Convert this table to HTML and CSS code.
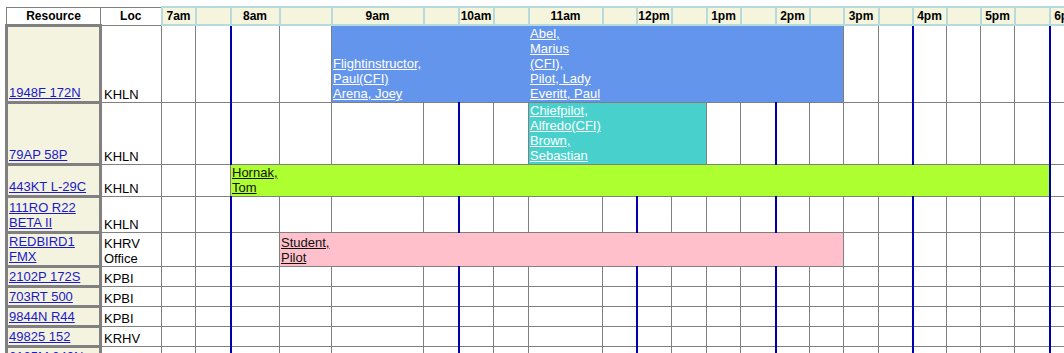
FILE: index.html
```html
<!DOCTYPE html>
<html>
<head>
<meta charset="utf-8">
<title>Schedule</title>
<link rel="stylesheet" href="styles.css">
</head>
<body>
<div class="page">
<table class="sched">
<colgroup>
<col class="c-res"><col class="c-loc">
<col class="w34"><col class="w35"><col class="w49"><col class="w52"><col class="w92"><col class="w35">
<col class="w35"><col class="w35"><col class="w74"><col class="w34"><col class="w35"><col class="w35">
<col class="w34"><col class="w35"><col class="w34"><col class="w34"><col class="w35"><col class="w34">
<col class="w34"><col class="w34"><col class="w34"><col class="w35"><col class="w34"><col class="w34">
<col class="w34"><col class="w34">
</colgroup>
<thead>
<tr>
<th class="h-res">Resource</th><th class="h-loc">Loc</th>
<th class="h-time">7am</th><th class="h-time"></th><th class="h-time">8am</th><th class="h-time"></th>
<th class="h-time">9am</th><th class="h-time"></th><th class="h-time">10am</th><th class="h-time"></th>
<th class="h-time">11am</th><th class="h-time"></th><th class="h-time">12pm</th><th class="h-time"></th>
<th class="h-time">1pm</th><th class="h-time"></th><th class="h-time">2pm</th><th class="h-time"></th>
<th class="h-time">3pm</th><th class="h-time"></th><th class="h-time">4pm</th><th class="h-time"></th>
<th class="h-time">5pm</th><th class="h-time"></th><th class="h-time">6pm</th><th class="h-time"></th>
<th class="h-time">7pm</th><th class="h-time"></th>
</tr>
</thead>
<tbody>
<tr>
<td class="res"><a href="#">1948F 172N</a></td><td class="loc">KHLN</td>
<td></td><td></td><td class="hr"></td><td></td>
<td class="ev ev-blue ev-join" colspan="4"><a href="#">Flightinstructor,<br>Paul(CFI)<br>Arena, Joey</a></td>
<td class="ev ev-blue" colspan="8"><a href="#">Abel,<br>Marius<br>(CFI),<br>Pilot, Lady<br>Everitt, Paul</a></td>
<td></td><td></td><td class="hr"></td><td></td><td></td><td></td><td class="hr"></td><td></td><td></td><td></td>
</tr>
<tr>
<td class="res"><a href="#">79AP 58P</a></td><td class="loc">KHLN</td>
<td></td><td></td><td class="hr"></td><td></td><td></td><td></td><td class="hr"></td><td></td>
<td class="ev ev-teal" colspan="4"><a href="#">Chiefpilot,<br>Alfredo(CFI)<br>Brown,<br>Sebastian</a></td>
<td></td><td></td><td class="hr"></td><td></td><td></td><td></td><td class="hr"></td><td></td><td></td><td></td><td class="hr"></td><td></td><td></td><td></td>
</tr>
<tr>
<td class="res"><a href="#">443KT L-29C</a></td><td class="loc">KHLN</td>
<td></td><td></td>
<td class="ev ev-green" colspan="20"><a href="#">Hornak,<br>Tom</a></td>
<td class="hr"></td><td></td><td></td><td></td>
</tr>
<tr class="row-roomy">
<td class="res"><a href="#">111RO R22 BETA II</a></td><td class="loc">KHLN</td>
<td></td><td></td><td class="hr"></td><td></td><td></td><td></td><td class="hr"></td><td></td><td></td><td></td><td class="hr"></td><td></td><td></td><td></td><td class="hr"></td><td></td><td></td><td></td><td class="hr"></td><td></td><td></td><td></td><td class="hr"></td><td></td><td></td><td></td>
</tr>
<tr class="row-snug">
<td class="res"><a href="#">REDBIRD1 FMX</a></td><td class="loc">KHRV<br>Office</td>
<td></td><td></td><td class="hr"></td>
<td class="ev ev-pink" colspan="13"><a href="#">Student,<br>Pilot</a></td>
<td></td><td></td><td class="hr"></td><td></td><td></td><td></td><td class="hr"></td><td></td><td></td><td></td>
</tr>
<tr>
<td class="res"><a href="#">2102P 172S</a></td><td class="loc">KPBI</td>
<td></td><td></td><td class="hr"></td><td></td><td></td><td></td><td class="hr"></td><td></td><td></td><td></td><td class="hr"></td><td></td><td></td><td></td><td class="hr"></td><td></td><td></td><td></td><td class="hr"></td><td></td><td></td><td></td><td class="hr"></td><td></td><td></td><td></td>
</tr>
<tr>
<td class="res"><a href="#">703RT 500</a></td><td class="loc">KPBI</td>
<td></td><td></td><td class="hr"></td><td></td><td></td><td></td><td class="hr"></td><td></td><td></td><td></td><td class="hr"></td><td></td><td></td><td></td><td class="hr"></td><td></td><td></td><td></td><td class="hr"></td><td></td><td></td><td></td><td class="hr"></td><td></td><td></td><td></td>
</tr>
<tr>
<td class="res"><a href="#">9844N R44</a></td><td class="loc">KPBI</td>
<td></td><td></td><td class="hr"></td><td></td><td></td><td></td><td class="hr"></td><td></td><td></td><td></td><td class="hr"></td><td></td><td></td><td></td><td class="hr"></td><td></td><td></td><td></td><td class="hr"></td><td></td><td></td><td></td><td class="hr"></td><td></td><td></td><td></td>
</tr>
<tr>
<td class="res"><a href="#">49825 152</a></td><td class="loc">KRHV</td>
<td></td><td></td><td class="hr"></td><td></td><td></td><td></td><td class="hr"></td><td></td><td></td><td></td><td class="hr"></td><td></td><td></td><td></td><td class="hr"></td><td></td><td></td><td></td><td class="hr"></td><td></td><td></td><td></td><td class="hr"></td><td></td><td></td><td></td>
</tr>
<tr>
<td class="res"><a href="#">6135M 340N</a></td><td class="loc">KRHV</td>
<td></td><td></td><td class="hr"></td><td></td><td></td><td></td><td class="hr"></td><td></td><td></td><td></td><td class="hr"></td><td></td><td></td><td></td><td class="hr"></td><td></td><td></td><td></td><td class="hr"></td><td></td><td></td><td></td><td class="hr"></td><td></td><td></td><td></td>
</tr>
</tbody>
</table>
</div>
</body>
</html>
```

FILE: styles.css
```css
html, body {
  margin: 0;
  padding: 0;
  overflow: hidden;
  background: #ffffff;
}

.page {
  padding: 6px 0 0 5px;
  font-family: "Liberation Sans", Arial, sans-serif;
  font-size: 13px;
  color: #000;
}

.sched {
  border-collapse: collapse;
  table-layout: fixed;
  width: 1179px;
}

.c-res { width: 94px; }
.c-loc { width: 61px; }
.w34 { width: 34px; }
.w35 { width: 35px; }
.w49 { width: 49px; }
.w52 { width: 52px; }
.w74 { width: 74px; }
.w92 { width: 92px; }

.sched th {
  font-size: 12px;
  font-weight: bold;
  line-height: 14px;
  padding: 1px 0;
  text-align: center;
  white-space: nowrap;
  overflow: hidden;
}

.h-res, .h-loc {
  background: #ffffff;
  border: 1px solid #808080;
}

.h-time {
  background: #f5f4dd;
  border: 2px solid #b7dadd;
}

.sched td {
  border: 1px solid #808080;
  padding: 0 1px;
  line-height: 15px;
  vertical-align: bottom;
  background: #ffffff;
}

.sched td.hr {
  border-left: 2px solid #0000aa;
}

.sched td.res {
  background: #f4f3e0;
  border: 3px solid #808080;
  padding: 1px 0 1px 1px;
}

.row-roomy td.res {
  padding-top: 2px;
}

.row-snug td.res {
  padding-top: 0;
}

.res a {
  color: #1a1ac8;
  text-decoration: underline;
}

.sched td.loc {
  padding: 0 1px 0 2px;
}

.sched td.ev {
  padding: 0 1px 1px 1px;
  white-space: nowrap;
}

.ev a {
  text-decoration: underline;
}

.ev-blue { background: #6495ed !important; }
.ev-teal { background: #48d1cc !important; }
.ev-green { background: #adff2f !important; }
.ev-pink { background: #ffc0cb !important; }

.ev-blue a, .ev-teal a { color: #ffffff; }
.ev-green a, .ev-pink a { color: #111111; }

.sched td.ev-join {
  border-right: 1px solid #6495ed;
}
```
